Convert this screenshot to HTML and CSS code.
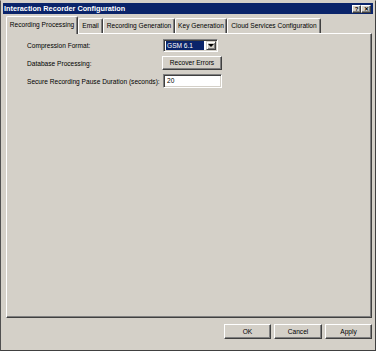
FILE: index.html
```html
<!DOCTYPE html>
<html>
<head>
<meta charset="utf-8">
<link rel="stylesheet" href="styles.css">
</head>
<body>
<div class="window">
  <div class="titlebar">
    <span class="title">Interaction Recorder Configuration</span>
    <div class="caps">
      <span class="capbtn">?</span>
      <span class="capbtn close">✕</span>
    </div>
  </div>
  <div class="tabs">
    <div class="tab selected w1">Recording Processing</div>
    <div class="tab w2">Email</div>
    <div class="tab w3">Recording Generation</div>
    <div class="tab w4">Key Generation</div>
    <div class="tab w5">Cloud Services Configuration</div>
  </div>
  <div class="panel">
    <div class="form">
      <div class="label">Compression Format:</div>
      <div class="combo">
        <span class="combo-value">GSM 6.1</span>
        <span class="combo-btn"><span class="arrow"></span></span>
      </div>
      <div class="label">Database Processing:</div>
      <div class="btn recover">Recover Errors</div>
      <div class="label">Secure Recording Pause Duration (seconds):</div>
      <div class="input">20</div>
    </div>
  </div>
  <div class="footer">
    <div class="btn foot">OK</div>
    <div class="btn foot wide">Cancel</div>
    <div class="btn foot">Apply</div>
  </div>
</div>
</body>
</html>
```
FILE: styles.css
```css
* { box-sizing: border-box; }
html, body { margin: 0; padding: 0; }
body {
  background: #d4d0c8;
  font-family: "Liberation Sans", Arial, sans-serif;
  font-size: 6.6px;
  color: #000;
}
.window {
  width: 376px;
  height: 351px;
  background: #d4d0c8;
  border: 1px solid #404040;
  border-top-color: #d4d0c8;
  border-left-color: #505050;
  padding: 1px;
  display: flex;
  flex-direction: column;
}
.window > .titlebar { margin: 1px 1px 0 1px; }
.titlebar {
  height: 11px;
  background: #0a246a;
  display: flex;
  align-items: center;
  justify-content: space-between;
  padding: 0 2px 0 1px;
}
.title {
  color: #fff;
  font-weight: bold;
  font-size: 7.3px;
  line-height: 11px;
}
.caps { display: flex; }
.capbtn {
  width: 9px;
  height: 8px;
  background: #d4d0c8;
  border: 1px solid;
  border-color: #fff #404040 #404040 #fff;
  box-shadow: inset -1px -1px 0 #808080;
  font-size: 6px;
  font-weight: bold;
  line-height: 6px;
  text-align: center;
  color: #000;
}
.capbtn.close { width: 10px; font-size: 5.5px; }
.tabs {
  display: flex;
  align-items: flex-end;
  height: 17px;
  margin: 2px 0 0 4px;
}
.tab {
  height: 15px;
  border: 1px solid;
  border-color: #fff #404040 transparent #fff;
  border-bottom: none;
  box-shadow: inset -1px 0 0 #808080;
  border-radius: 2px 2px 0 0;
  text-align: center;
  line-height: 14px;
  white-space: nowrap;
  background: #d4d0c8;
}
.tab.selected {
  height: 18px;
  margin-bottom: -1px;
  position: relative;
  z-index: 1;
  line-height: 16px;
}
.w1 { width: 72px; }
.w2 { width: 25px; }
.w3 { width: 72px; }
.w4 { width: 52px; }
.w5 { width: 94px; }
.panel {
  margin: 0 2px 0 4px;
  height: 285px;
  border: 1px solid;
  border-color: #fff #404040 #404040 #fff;
  box-shadow: inset -1px -1px 0 #808080;
  padding: 5px 0 0 20px;
}
.form {
  display: grid;
  grid-template-columns: 135px auto;
  row-gap: 4px;
  align-items: center;
}
.label { white-space: nowrap; }
.combo {
  width: 55px;
  height: 13px;
  margin-left: 1px;
  background: #fff;
  border: 1px solid;
  border-color: #808080 #fff #fff #808080;
  box-shadow: inset 1px 1px 0 #404040, inset -1px -1px 0 #d4d0c8;
  display: flex;
  align-items: center;
  padding: 1px 1px 1px 2px;
}
.combo-value {
  flex: 1;
  height: 9px;
  background: #0a246a;
  color: #fff;
  line-height: 9px;
  padding-left: 1px;
  margin-right: 2px;
}
.combo-btn {
  width: 10px;
  height: 9px;
  background: #d4d0c8;
  border: 1px solid;
  border-color: #d4d0c8 #404040 #404040 #d4d0c8;
  box-shadow: inset 1px 1px 0 #fff, inset -1px -1px 0 #808080;
  display: flex;
  align-items: center;
  justify-content: center;
}
.arrow {
  width: 0;
  height: 0;
  border-left: 3px solid transparent;
  border-right: 3px solid transparent;
  border-top: 3px solid #000;
}
.btn {
  background: #d4d0c8;
  border: 1px solid;
  border-color: #fff #404040 #404040 #fff;
  box-shadow: inset -1px -1px 0 #808080;
  text-align: center;
  white-space: nowrap;
}
.recover {
  width: 60px;
  height: 14px;
  line-height: 12px;
}
.input {
  width: 59px;
  height: 14px;
  margin-left: 1px;
  background: #fff;
  border: 1px solid;
  border-color: #808080 #fff #fff #808080;
  box-shadow: inset 1px 1px 0 #404040, inset -1px -1px 0 #d4d0c8;
  padding-left: 3px;
  line-height: 11px;
}
.footer {
  display: flex;
  justify-content: flex-end;
  gap: 3px;
  margin: 6px 2px 0 0;
}
.foot {
  width: 47px;
  height: 15px;
  line-height: 13px;
}
.foot.wide { width: 48px; }
```
